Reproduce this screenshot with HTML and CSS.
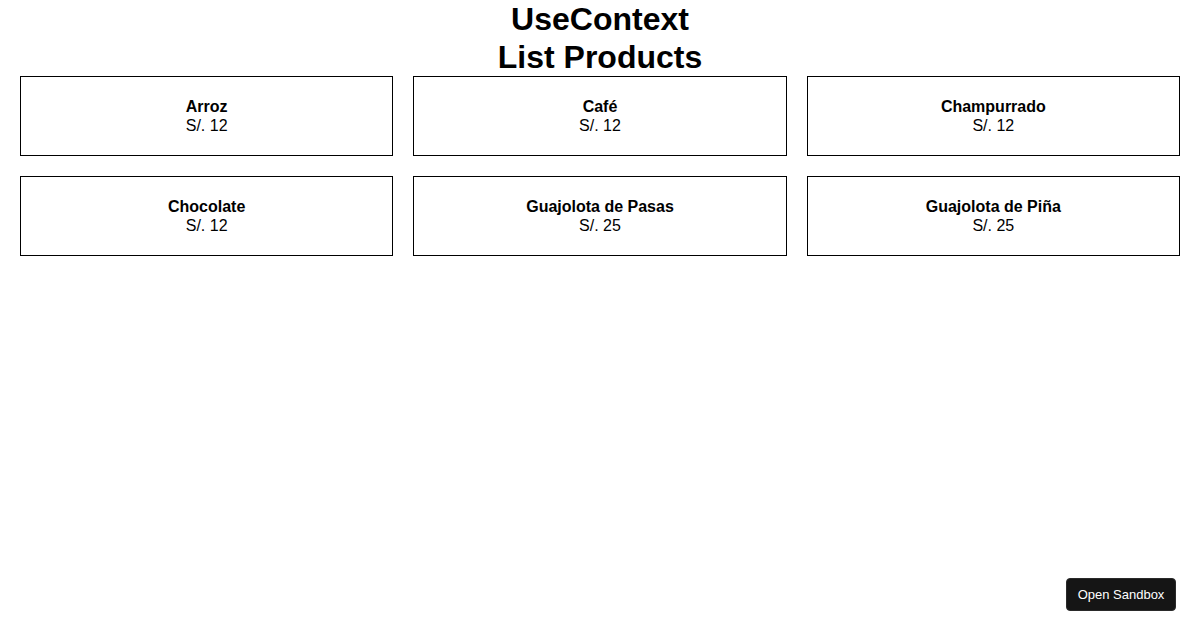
FILE: index.html
```html
<!DOCTYPE html>
<html lang="es">
<head>
<meta charset="utf-8">
<title>UseContext</title>
<link rel="stylesheet" href="styles.css">
</head>
<body>
<h1 class="title">UseContext<br>List Products</h1>
<div class="grid">
  <div class="card"><div class="name">Arroz</div><div class="price">S/. 12</div></div>
  <div class="card"><div class="name">Café</div><div class="price">S/. 12</div></div>
  <div class="card"><div class="name">Champurrado</div><div class="price">S/. 12</div></div>
  <div class="card"><div class="name">Chocolate</div><div class="price">S/. 12</div></div>
  <div class="card"><div class="name">Guajolota de Pasas</div><div class="price">S/. 25</div></div>
  <div class="card"><div class="name">Guajolota de Piña</div><div class="price">S/. 25</div></div>
</div>
<a class="sandbox" href="#">Open Sandbox</a>
</body>
</html>
```
FILE: styles.css
```css
html, body {
  margin: 0;
  padding: 0;
  background: #fff;
  font-family: "Liberation Sans", Arial, sans-serif;
  color: #000;
}
.title {
  margin: 0;
  font-size: 32px;
  font-weight: bold;
  text-align: center;
  line-height: 38px;
}
.grid {
  display: grid;
  grid-template-columns: repeat(3, 1fr);
  gap: 20px;
  padding: 0 20px;
}
.card {
  border: 1px solid #000;
  padding: 20px;
  text-align: center;
  font-size: 16px;
  line-height: 19px;
}
.name {
  font-weight: bold;
}
.sandbox {
  position: fixed;
  right: 24px;
  bottom: 19px;
  width: 110px;
  height: 33px;
  box-sizing: border-box;
  display: flex;
  align-items: center;
  justify-content: center;
  background: #151515;
  color: #fff;
  border-radius: 4px;
  font-size: 13px;
  text-decoration: none;
  border: 1px solid #2a2a2a;
}
```
